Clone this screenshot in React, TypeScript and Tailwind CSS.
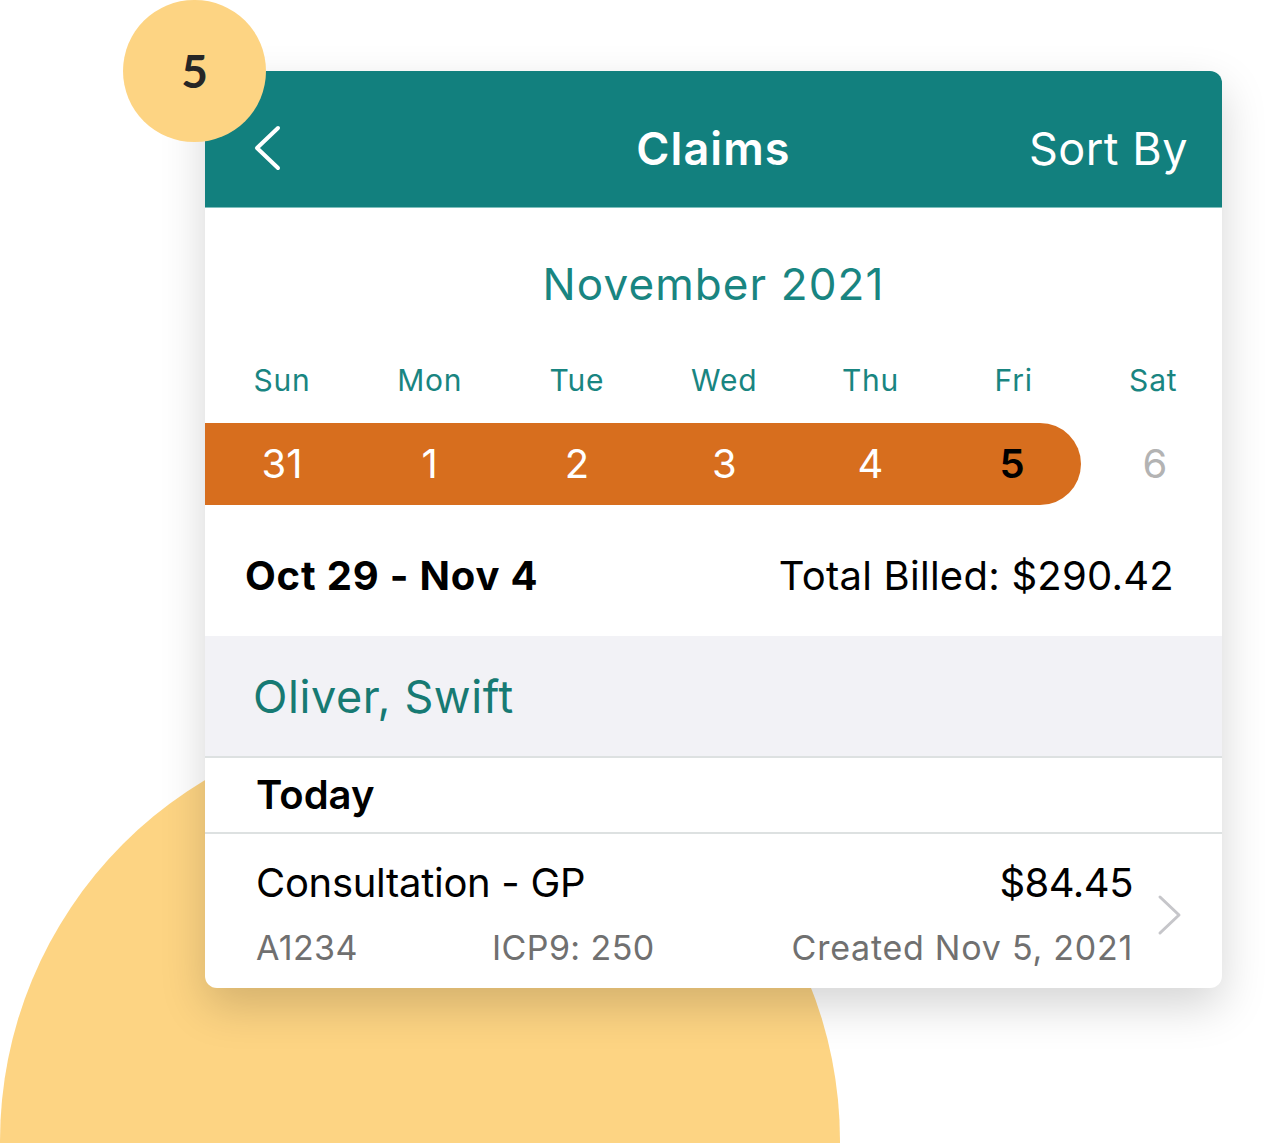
import React from 'react'

const days = ['Sun', 'Mon', 'Tue', 'Wed', 'Thu', 'Fri', 'Sat']
const week = ['31', '1', '2', '3', '4', '5']

export default function App() {
  return (
    <div className="relative w-[1280px] h-[1143px] overflow-hidden bg-white font-['Inter','Liberation_Sans',sans-serif]">
      {/* decorative yellow shapes */}
      <div className="absolute left-0 top-[721px] w-[840px] h-[840px] rounded-full bg-[#fdd483]" />

      <div className="relative ml-[205px] mt-[71px] w-[1017px] rounded-[12px] overflow-hidden bg-white shadow-[0_18px_45px_rgba(0,0,0,0.17)]">
        {/* header */}
        <div className="h-[137px] pt-[18px] bg-[#12807e] border-b border-[#7fbfbd] grid grid-cols-[1fr_auto_1fr] items-center text-white">
          <div className="pl-[49px]">
            <svg width="28" height="46" viewBox="0 0 28 46" fill="none">
              <path d="M24 3 L3 23 L24 43" stroke="white" strokeWidth="4" strokeLinecap="round" strokeLinejoin="round" />
            </svg>
          </div>
          <h1 className="text-[45px] leading-none font-semibold tracking-[1.1px]">Claims</h1>
          <div className="pr-[34px] text-right text-[45px] leading-none tracking-[0.5px]">Sort By</div>
        </div>

        {/* month */}
        <div className="h-[152px] flex items-center justify-center text-[44px] leading-none text-[#198581] tracking-[1.1px]">
          November 2021
        </div>

        {/* weekday names */}
        <div className="h-[40px] pl-[3px] grid grid-cols-[148px_147.5px_147px_147.5px_145px_141.5px_1fr] items-center text-[30px] leading-none text-[#198581] tracking-[0.8px]">
          {days.map((d) => (
            <span key={d} className="text-center">{d}</span>
          ))}
        </div>

        {/* week strip */}
        <div className="mt-[23px] flex items-center">
          <div className="w-[876px] h-[82px] rounded-r-full bg-[#d76e1e] pl-[3px] grid grid-cols-[148px_147.5px_147px_147.5px_145px_138px] items-center text-[40px] leading-none">
            {week.map((n) => (
              <span key={n} className={n === '5' ? 'text-center font-semibold text-black' : 'text-center text-white'}>
                {n}
              </span>
            ))}
          </div>
          <span className="w-[141px] pl-[7px] text-center text-[40px] leading-none text-[#b3b3b3]">6</span>
        </div>

        {/* range + total */}
        <div className="h-[131px] pt-[11px] pl-[40px] pr-[48px] flex items-center justify-between text-[40px] leading-none text-black">
          <span className="font-bold tracking-[0.8px]">Oct 29 - Nov 4</span>
          <span className="tracking-[0.25px]">Total Billed: $290.42</span>
        </div>

        {/* patient */}
        <div className="h-[122px] bg-[#f2f2f6] border-b-2 border-[#dde1e1] pl-[48px] flex items-center text-[45px] leading-none text-[#177a73] tracking-[0.6px]">
          Oliver, Swift
        </div>

        {/* day group */}
        <div className="h-[76px] border-b-2 border-[#dde1e1] pl-[51px] flex items-center text-[40px] leading-none font-semibold text-black">
          Today
        </div>

        {/* claim row */}
        <div className="h-[154px] flex items-center">
          <div className="flex-1 pl-[51px] pt-[29px] pb-[23px] flex flex-col gap-[28px]">
            <div className="flex items-center justify-between text-[40px] leading-none text-black">
              <span className="tracking-[-0.3px]">Consultation - GP</span>
              <span className="tracking-[-0.5px]">$84.45</span>
            </div>
            <div className="flex items-center text-[34px] leading-none text-[#707070] tracking-[0.4px]">
              <span className="w-[236px]">A1234</span>
              <span>ICP9: 250</span>
              <span className="ml-auto tracking-[0.75px]">Created Nov 5, 2021</span>
            </div>
          </div>
          <div className="w-[89px] pl-[24px] pt-[8px] flex items-center">
            <svg width="26" height="42" viewBox="0 0 26 42" fill="none">
              <path d="M3 3 L22 21 L3 39" stroke="#c6c6ca" strokeWidth="3" strokeLinecap="round" strokeLinejoin="round" />
            </svg>
          </div>
        </div>
      </div>

      {/* step badge */}
      <div className="absolute left-[123px] top-0 w-[143px] h-[142px] rounded-full bg-[#fdd483] flex items-center justify-center font-['Lato','Liberation_Sans',sans-serif] font-bold text-[46px] leading-none text-[#262626]">
        5
      </div>
    </div>
  )
}
